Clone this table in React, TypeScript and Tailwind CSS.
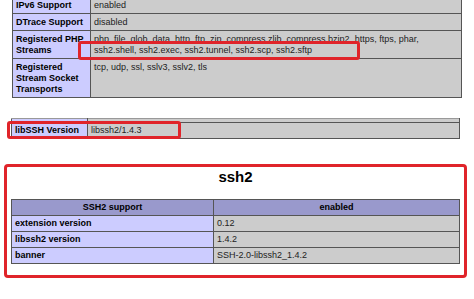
const label =
  "bg-[#ccccff] font-bold text-black border border-[#555] px-[3px] py-[2.5px] align-top text-left";
const value =
  "bg-[#cccccc] text-[#222] border border-[#555] px-[3px] py-[2.5px] align-top text-left";

const Row = ({
  name,
  val,
  tight,
}: {
  name: React.ReactNode;
  val: React.ReactNode;
  tight?: boolean;
}) => (
  <tr>
    <td className={label + (tight ? " py-[2px]" : "")}>{name}</td>
    <td className={value + (tight ? " py-[2px]" : "")}>{val}</td>
  </tr>
);

export default function App() {
  return (
    <div className="relative w-[474px] h-[299px] overflow-hidden bg-white font-['Liberation_Sans',Arial,sans-serif] text-[9px] leading-[11px]">
      {/* runtime configuration table, cut at the top */}
      <table className="ml-[12px] -mt-[4px] w-[450px] border-collapse table-fixed">
        <colgroup>
          <col className="w-[78px]" />
          <col />
        </colgroup>
        <tbody>
          <Row name="IPv6 Support" val="enabled" />
          <Row name="DTrace Support" val="disabled" />
          <Row
            name={
              <>
                Registered PHP
                <br />
                Streams
              </>
            }
            val={
              <>
                php, file, glob, data, http, ftp, zip, compress.zlib, compress.bzip2, https, ftps, phar,
                <br />
                ssh2.shell, ssh2.exec, ssh2.tunnel, ssh2.scp, ssh2.sftp
              </>
            }
          />
          <Row
            name={
              <>
                Registered
                <br />
                Stream Socket
                <br />
                Transports
              </>
            }
            val="tcp, udp, ssl, sslv3, sslv2, tls"
          />
        </tbody>
      </table>

      {/* curl section, only the last row shown */}
      <table className="ml-[11px] mt-[20px] w-[449px] border-collapse table-fixed">
        <colgroup>
          <col className="w-[76px]" />
          <col />
        </colgroup>
        <tbody>
          <tr className="h-[4px]">
            <td className="bg-[#ccccff] border-x border-[#555] border-t border-t-[#999] p-0" />
            <td className="bg-[#cccccc] border-x border-[#555] border-t border-t-[#999] p-0" />
          </tr>
          <Row name="libSSH Version" val="libssh2/1.4.3" tight />
        </tbody>
      </table>

      {/* ssh2 module block */}
      <div className="ml-[4px] mt-[25px] w-[463px] border-[3px] border-[#e0242a] rounded-[4px] px-[4px] pb-[11px]">
        <h2 className="mt-[1px] mb-[14px] text-center text-[15px] leading-[17px] font-bold text-black">
          ssh2
        </h2>
        <table className="w-full border-collapse table-fixed">
          <colgroup>
            <col className="w-[202px]" />
            <col />
          </colgroup>
          <thead>
            <tr>
              <th className="bg-[#9999cc] font-bold text-black border border-[#555] px-[3px] py-[2px] text-center">
                SSH2 support
              </th>
              <th className="bg-[#9999cc] font-bold text-black border border-[#555] px-[3px] py-[2px] text-center">
                enabled
              </th>
            </tr>
          </thead>
          <tbody>
            <Row name="extension version" val="0.12" tight />
            <Row name="libssh2 version" val="1.4.2" tight />
            <Row name="banner" val="SSH-2.0-libssh2_1.4.2" tight />
          </tbody>
        </table>
      </div>

      {/* red highlight marks */}
      <div className="absolute left-[78px] top-[41px] w-[282px] h-[19px] border-[3px] border-[#e0242a] rounded-[3px]" />
      <div className="absolute left-[7px] top-[121px] w-[174px] h-[18px] border-[3px] border-[#e0242a] rounded-[3px]" />
    </div>
  );
}
